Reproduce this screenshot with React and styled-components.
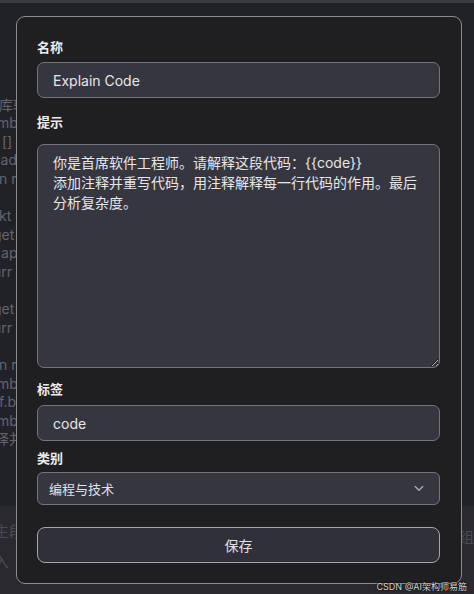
import React from 'react';
import styled, { createGlobalStyle } from 'styled-components';

const GlobalStyle = createGlobalStyle`
  html, body {
    margin: 0;
    padding: 0;
    background: #1b1b20;
  }
  * {
    box-sizing: border-box;
  }
`;

const FONT = `Inter, "Noto Sans CJK SC", "Noto Sans", sans-serif`;

// Page behind the dialog
const Page = styled.div`
  position: relative;
  width: 474px;
  height: 594px;
  overflow: hidden;
  background: #1b1b20;
  font-family: ${FONT};
  display: flex;
  flex-direction: column;
`;

const TopStrip = styled.div`
  height: 3px;
  background: #3b3b41;
`;

const Editor = styled.div`
  flex: 1;
  padding: 74px 0 0;
  background: #212128;
  display: flex;
  flex-direction: column;
`;

const CodeLine = styled.div`
  height: 18.6px;
  line-height: 18.6px;
  font-size: 14px;
  color: #64646d;
  white-space: nowrap;
  margin-left: ${(p) => p.$shift || 0}px;
`;

const Footer = styled.div`
  height: 88px;
  background: #29292f;
  display: flex;
  justify-content: space-between;
  padding: 17px 0 0;
`;

const FooterCol = styled.div`
  display: flex;
  flex-direction: column;
  gap: 12px;
  font-size: 15px;
  line-height: 18px;
  color: #4b4b53;
  white-space: nowrap;
  margin-left: ${(p) => p.$shift || 0}px;
  margin-top: ${(p) => p.$top || 0}px;
`;

// Dialog
const Modal = styled.div`
  position: absolute;
  left: 16px;
  top: 16px;
  width: 446px;
  height: 568px;
  background: #1f1f22;
  border: 1px solid #8a8a92;
  border-radius: 9px;
  padding: 22px 21px 0 20px;
  display: flex;
  flex-direction: column;
`;

const Label = styled.div`
  font-size: 13px;
  line-height: 16px;
  font-weight: 600;
  color: #ececee;
  margin-top: ${(p) => p.$top || 0}px;
  margin-bottom: ${(p) => p.$gap || 8}px;
`;

const Input = styled.input`
  display: block;
  width: 100%;
  height: 36px;
  background: #363641;
  border: 1px solid #74747e;
  border-radius: 7px;
  padding: 0 15px;
  font-family: ${FONT};
  font-size: 14px;
  color: #e6e6e8;
  outline: none;
`;

const TextArea = styled.textarea`
  display: block;
  width: 100%;
  height: 224px;
  background: #363641;
  border: 1px solid #74747e;
  border-radius: 7px;
  padding: 8px 15px;
  font-family: ${FONT};
  font-size: 14px;
  line-height: 20px;
  color: #e6e6e8;
  outline: none;
  resize: vertical;
  color-scheme: dark;
`;

const Select = styled.div`
  height: 33px;
  background: #363641;
  border: 1px solid #74747e;
  border-radius: 6px;
  padding: 0 15px 0 11px;
  display: flex;
  align-items: center;
  justify-content: space-between;
  font-size: 13px;
  color: #e2e2e6;
`;

const SaveButton = styled.button`
  margin-top: 22px;
  height: 36px;
  width: 100%;
  background: #30303a;
  border: 1px solid #a4a4ac;
  border-radius: 8px;
  font-family: ${FONT};
  font-size: 14px;
  color: #e2e2e6;
  cursor: pointer;
`;

const Watermark = styled.div`
  position: absolute;
  right: 7px;
  bottom: 1px;
  font-size: 9px;
  color: #d8d8dc;
  text-shadow: 0 0 2px #000, 0 0 1px #000;
  white-space: nowrap;
`;

const codeLines = [
  { t: '' },
  { t: '库软件工程师', s: -1 },
  { t: 'mbda', s: -3 },
  { t: ' [] ', s: 2 },
  { t: 'oad', s: -8 },
  { t: 'n r', s: -1 },
  { t: '' },
  { t: 'ckt', s: -9 },
  { t: 'get', s: -7 },
  { t: '.ap', s: -3 },
  { t: 'urr', s: -7 },
  { t: '' },
  { t: 'get', s: -7 },
  { t: 'urr', s: -7 },
  { t: '' },
  { t: 'n r', s: -1 },
  { t: 'mb', s: -3 },
  { t: 'f.b', s: -1 },
  { t: 'mb', s: -3 },
  { t: '译并', s: -5 },
];

const Chevron = () => (
  <svg width="10" height="7" viewBox="0 0 10 7" fill="none">
    <path d="M1.2 1.5 5 5.3l3.8-3.8" stroke="#a8a8b0" strokeWidth="1.4" strokeLinecap="round" strokeLinejoin="round" />
  </svg>
);

const App = () => (
  <>
    <GlobalStyle />
    <Page>
      <TopStrip />
      <Editor>
        {codeLines.map((l, i) => (
          <CodeLine key={i} $shift={l.s}>
            {l.t || '\u00a0'}
          </CodeLine>
        ))}
      </Editor>
      <Footer>
        <FooterCol $shift={-6}>
          <span>生段</span>
          <span>入</span>
        </FooterCol>
        <FooterCol $top={6}>
          <span>组</span>
        </FooterCol>
      </Footer>

      <Modal>
        <Label $gap={7}>名称</Label>
        <Input readOnly value="Explain Code" />

        <Label $top={16} $gap={14}>提示</Label>
        <TextArea
          readOnly
          value={'你是首席软件工程师。请解释这段代码：{{code}}\n添加注释并重写代码，用注释解释每一行代码的作用。最后分析复杂度。'}
        />

        <Label $top={13} $gap={8}>标签</Label>
        <Input readOnly value="code" />

        <Label $top={9} $gap={6}>类别</Label>
        <Select>
          <span>编程与技术</span>
          <Chevron />
        </Select>

        <SaveButton>保存</SaveButton>
      </Modal>

      <Watermark>CSDN @AI架构师易筋</Watermark>
    </Page>
  </>
);

export default App;
